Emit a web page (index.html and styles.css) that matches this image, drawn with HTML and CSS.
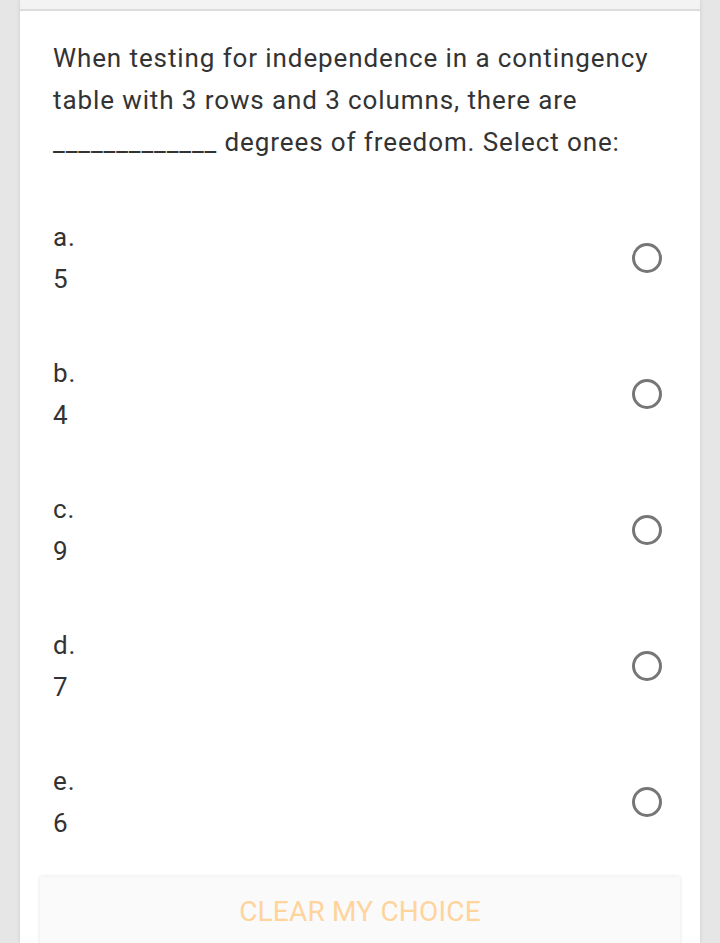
FILE: index.html
```html
<!DOCTYPE html>
<html>
<head>
<meta charset="utf-8">
<link rel="stylesheet" href="styles.css">
</head>
<body>
<div class="card">
  <div class="card-top"></div>
  <div class="card-body">
    <p class="question">When testing for independence in a contingency table with 3 rows and 3 columns, there are <span class="blank">_____________</span> degrees of freedom. Select one:</p>
    <div class="options">
      <label class="option"><div class="opt-text"><div>a.</div><div>5</div></div><span class="radio"></span></label>
      <label class="option"><div class="opt-text"><div>b.</div><div>4</div></div><span class="radio"></span></label>
      <label class="option"><div class="opt-text"><div>c.</div><div>9</div></div><span class="radio"></span></label>
      <label class="option"><div class="opt-text"><div>d.</div><div>7</div></div><span class="radio"></span></label>
      <label class="option"><div class="opt-text"><div>e.</div><div>6</div></div><span class="radio"></span></label>
    </div>
    <div class="clear-btn">CLEAR MY CHOICE</div>
  </div>
</div>
</body>
</html>
```

FILE: styles.css
```css
html, body {
  margin: 0;
  padding: 0;
  background: #e6e6e6;
  height: 943px;
  overflow: hidden;
}
body {
  font-family: Roboto, "Liberation Sans", sans-serif;
  color: #333333;
}
.card {
  margin: 0 20px;
  background: #ffffff;
  box-shadow: 0 0 4px rgba(0,0,0,0.12);
  height: 943px;
}
.card-top {
  height: 9px;
  background: #f3f3f3;
  border-bottom: 2px solid #dcdcdc;
}
.card-body {
  padding: 26px 20px 0 33px;
}
.question {
  margin: 0;
  font-size: 26px;
  line-height: 42px;
  letter-spacing: 0.9px;
  padding-right: 0;
}
.options {
  margin-top: 53px;
  display: flex;
  flex-direction: column;
  gap: 52px;
}
.option {
  display: flex;
  align-items: center;
  justify-content: space-between;
  padding-right: 18px;
}
.opt-text {
  font-size: 26px;
  line-height: 42px;
  letter-spacing: 0.9px;
}
.radio {
  width: 24px;
  height: 24px;
  border: 3px solid #767676;
  border-radius: 50%;
}
.clear-btn {
  margin: 33px 0 0 -13px;
  background: #fafafa;
  box-shadow: 0 0 4px rgba(0,0,0,0.12);
  text-align: center;
  font-size: 28px;
  line-height: 30px;
  padding: 20px 0 30px;
  color: #ffd49c;
  letter-spacing: 0.2px;
  width: 640px;
}
```
